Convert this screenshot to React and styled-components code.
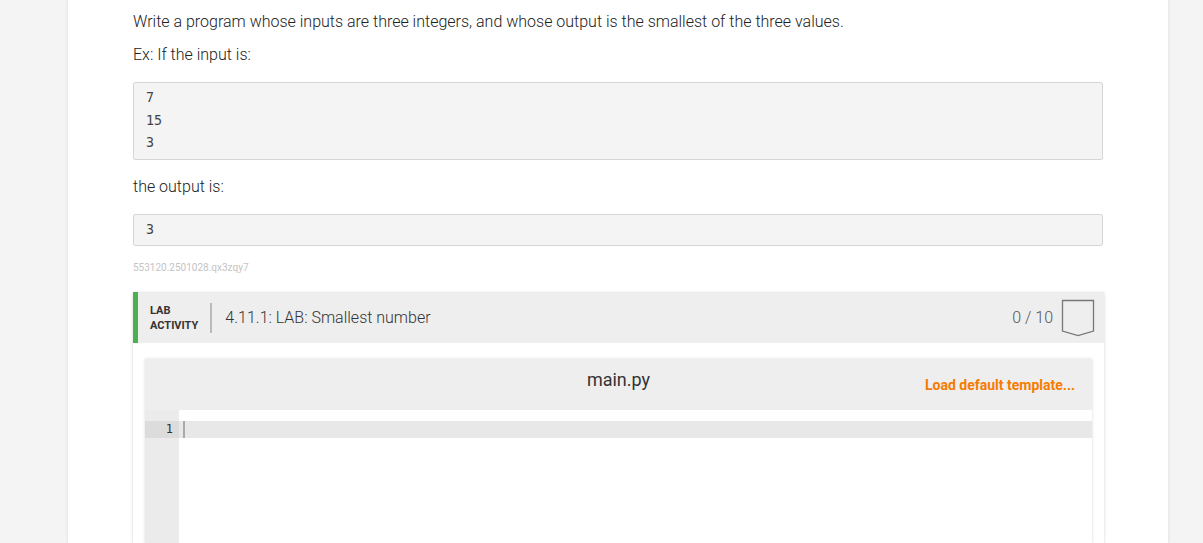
import React from "react";
import styled, { createGlobalStyle } from "styled-components";

const Global = createGlobalStyle`
  html, body { margin: 0; padding: 0; background: #f4f4f4; }
  body { font-family: Roboto, "Liberation Sans", Arial, sans-serif; overflow: hidden; }
`;

const Page = styled.div`
  display: flex;
  padding-left: 68px;
  height: 543px;
`;

const Card = styled.main`
  width: 1100px;
  background: #fff;
  box-shadow: 0 0 3px rgba(0, 0, 0, 0.12);
  padding: 11px 65px 0 65px;
  box-sizing: border-box;
  display: flex;
  flex-direction: column;
`;

const Para = styled.p`
  margin: ${(p) => p.$top || 0}px 0 0 0;
  font-size: 16px;
  line-height: 22px;
  font-weight: 300;
  color: #222;
`;

const CodeBox = styled.pre`
  margin: 16px 0 0 0;
  background: #f4f4f4;
  border: 1px solid #d6d6d6;
  border-radius: 2px;
  padding: 4px 12px;
  font-family: "DejaVu Sans Mono", "Liberation Mono", monospace;
  font-size: 13.3px;
  line-height: 22.5px;
  color: #444;
`;

const Tag = styled.div`
  margin-top: 16px;
  font-size: 10px;
  line-height: 12px;
  color: #c4c4c4;
  font-family: Roboto, "Liberation Sans", sans-serif;
`;

const Lab = styled.section`
  margin-top: 18px;
  width: 971px;
  background: #fff;
  box-shadow: 0 1px 3px rgba(0, 0, 0, 0.18);
  flex: 1;
  display: flex;
  flex-direction: column;
`;

const LabHeader = styled.header`
  height: 51px;
  background: #eee;
  border-left: 5px solid #4caf50;
  display: flex;
  align-items: center;
  padding: 0 9px 0 12px;
  flex-shrink: 0;
`;

const LabLabel = styled.div`
  font-size: 11px;
  font-weight: 700;
  line-height: 15px;
  color: #333;
  padding-right: 12px;
  border-right: 2px solid #bbb;
  margin-top: 1px;
`;

const LabTitle = styled.div`
  font-size: 16px;
  font-weight: 300;
  color: #333;
  margin-left: 13px;
  flex: 1;
`;

const Score = styled.div`
  font-size: 16px;
  font-weight: 300;
  color: #555;
  margin-right: 8px;
  margin-left: 1px;
`;

const LabBody = styled.div`
  padding: 16px 12px 0 12px;
  flex: 1;
  display: flex;
`;

const Editor = styled.div`
  flex: 1;
  box-shadow: 0 0 3px rgba(0, 0, 0, 0.15);
  display: flex;
  flex-direction: column;
`;

const EditorHeader = styled.div`
  height: 51px;
  background: #eee;
  display: grid;
  grid-template-columns: 1fr auto 1fr;
  align-items: center;
`;

const FileName = styled.div`
  grid-column: 2;
  font-size: 18px;
  color: #333;
  font-weight: 400;
  margin-bottom: 10px;
`;

const LoadLink = styled.a`
  grid-column: 3;
  justify-self: end;
  font-size: 14px;
  font-weight: 700;
  color: #f57c00;
  text-decoration: none;
  margin-right: 17px;
`;

const CodeArea = styled.div`
  flex: 1;
  display: flex;
`;

const Gutter = styled.div`
  width: 34px;
  background: #ebebeb;
  padding-top: 11px;
`;

const LineNo = styled.div`
  height: 17px;
  background: ${(p) => (p.$active ? "#dcdcdc" : "transparent")};
  text-align: right;
  padding-right: 6px;
  font-family: "DejaVu Sans Mono", "Liberation Mono", monospace;
  font-size: 12px;
  line-height: 17px;
  color: #333;
`;

const Lines = styled.div`
  flex: 1;
  padding-top: 11px;
`;

const Line = styled.div`
  height: 17px;
  background: ${(p) => (p.$active ? "#e8e8e8" : "transparent")};
  display: flex;
  padding-left: 4px;
`;

const Cursor = styled.span`
  width: 2px;
  height: 17px;
  background: #aaa;
`;

function Badge() {
  return (
    <svg width="34" height="38" viewBox="0 0 34 38">
      <path d="M1.5 1.5 H32.5 V32 L17 36.5 L1.5 32 Z" fill="none" stroke="#777" strokeWidth="1.3" />
    </svg>
  );
}

export default function App() {
  return (
    <>
      <Global />
      <Page>
        <Card>
          <Para>
            Write a program whose inputs are three integers, and whose output is the smallest of the three values.
          </Para>
          <Para $top={11}>Ex: If the input is:</Para>
          <CodeBox>{"7\n15\n3"}</CodeBox>
          <Para $top={16}>the output is:</Para>
          <CodeBox>3</CodeBox>
          <Tag>553120.2501028.qx3zqy7</Tag>
          <Lab>
            <LabHeader>
              <LabLabel>
                LAB
                <br />
                ACTIVITY
              </LabLabel>
              <LabTitle>4.11.1: LAB: Smallest number</LabTitle>
              <Score>0 / 10</Score>
              <Badge />
            </LabHeader>
            <LabBody>
              <Editor>
                <EditorHeader>
                  <FileName>main.py</FileName>
                  <LoadLink href="#">Load default template...</LoadLink>
                </EditorHeader>
                <CodeArea>
                  <Gutter>
                    <LineNo $active>1</LineNo>
                  </Gutter>
                  <Lines>
                    <Line $active>
                      <Cursor />
                    </Line>
                  </Lines>
                </CodeArea>
              </Editor>
            </LabBody>
          </Lab>
        </Card>
      </Page>
    </>
  );
}
